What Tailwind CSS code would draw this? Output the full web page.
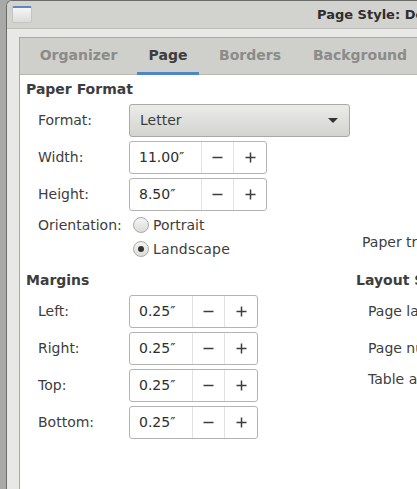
<!DOCTYPE html>
<html lang="en">
<head>
    <meta charset="UTF-8">
    <title>Page Style</title>
    <script src="https://cdn.jsdelivr.net/npm/@tailwindcss/browser@4"></script>
</head>
<body class="w-[417px] h-[489px] overflow-hidden bg-[#a9a9a7] font-['DejaVu_Sans',sans-serif] text-[14px] text-[#3d3d3d]">
    <div class="ml-[6px] w-[411px] h-[489px] overflow-hidden flex flex-col bg-[#e8e8e6] border-l border-t border-[#6b6b69] rounded-tl-[6px]">
        <!-- title bar -->
        <div class="h-[28px] shrink-0 flex items-center bg-[#d2d2cf] border-b border-[#bdbdba]">
            <div class="ml-[5px] w-[20px] h-[17px] shrink-0 rounded-[2px] border border-[#c4c4c2] border-t-2 border-t-[#5f86c4] bg-gradient-to-b from-[#f6f6f5] to-[#dcdcda]"></div>
            <div class="ml-[285px] text-[13px] font-bold whitespace-nowrap text-[#2e2e2e]">Page Style: Default</div>
        </div>
        <!-- notebook -->
        <div class="ml-[12px] mt-[8px] flex-1 flex flex-col border-l border-t border-[#a8a8a6] bg-white">
            <div class="h-[37px] shrink-0 flex bg-[#cfcfcc] border-b border-[#b6b6b3] font-bold">
                <div class="ml-[4px] w-[109px] h-[37px] shrink-0 pb-[2px] flex items-center justify-center text-[#8b8b89]">Organizer</div>
                <div class="ml-[4px] w-[62px] h-[37px] shrink-0 flex items-center justify-center text-[#3d3d3d] border-b-[3px] border-[#4f86c6]">Page</div>
                <div class="ml-[6px] w-[90px] h-[37px] shrink-0 pb-[2px] flex items-center justify-center text-[#8b8b89]">Borders</div>
                <div class="ml-[4px] w-[122px] h-[37px] shrink-0 pb-[2px] flex items-center justify-center text-[#8b8b89]">Background</div>
            </div>
            <div class="flex-1 flex pl-[6px] pt-[6px] bg-white">
                <!-- left column -->
                <div class="w-[330px] shrink-0">
                    <div class="font-bold h-[17px] leading-[17px]">Paper Format</div>
                    <div class="mt-[6px] pl-[12px] flex flex-col">
                        <div class="flex items-center h-[33px]">
                            <div class="w-[91px]">Format:</div>
                            <div class="w-[221px] h-[33px] flex items-center justify-between pl-[10px] pr-[11px] rounded-[3px] border border-[#a9a9a7] bg-gradient-to-b from-[#ebebe9] to-[#d3d3d0]">
                                <span>Letter</span>
                                <span class="w-0 h-0 border-x-[5px] border-x-transparent border-t-[5px] border-t-[#333333]"></span>
                            </div>
                        </div>
                        <div class="mt-[4px] flex items-center h-[33px]">
                            <div class="w-[91px]">Width:</div>
                            <div class="w-[138px] h-[33px] flex rounded-[3px] border border-[#b4b4b2] text-[#2e2e2e]">
                                <div class="w-[71px] pl-[9px] flex items-center">11.00″</div>
                                <div class="w-[33px] flex items-center justify-center border-l border-[#e2e2e0]"><svg width="11" height="11" viewBox="0 0 11 11"><path d="M0.5 5.5h10" stroke="#3d3d3d" stroke-width="1.5"/></svg></div>
                                <div class="w-[33px] flex items-center justify-center border-l border-[#e2e2e0]"><svg width="11" height="11" viewBox="0 0 11 11"><path d="M0.5 5.5h10M5.5 0.5v10" stroke="#3d3d3d" stroke-width="1.5"/></svg></div>
                            </div>
                        </div>
                        <div class="mt-[4px] flex items-center h-[33px]">
                            <div class="w-[91px]">Height:</div>
                            <div class="w-[138px] h-[33px] flex rounded-[3px] border border-[#b4b4b2] text-[#2e2e2e]">
                                <div class="w-[71px] pl-[9px] flex items-center">8.50″</div>
                                <div class="w-[33px] flex items-center justify-center border-l border-[#e2e2e0]"><svg width="11" height="11" viewBox="0 0 11 11"><path d="M0.5 5.5h10" stroke="#3d3d3d" stroke-width="1.5"/></svg></div>
                                <div class="w-[33px] flex items-center justify-center border-l border-[#e2e2e0]"><svg width="11" height="11" viewBox="0 0 11 11"><path d="M0.5 5.5h10M5.5 0.5v10" stroke="#3d3d3d" stroke-width="1.5"/></svg></div>
                            </div>
                        </div>
                        <div class="mt-[2px] flex items-center h-[24px]">
                            <div class="w-[95px]">Orientation:</div>
                            <div class="w-[16px] h-[16px] rounded-full border border-[#a9a9a7] bg-gradient-to-b from-[#f4f4f3] to-[#dcdcda]"></div>
                            <div class="ml-[4px]">Portrait</div>
                        </div>
                        <div class="flex items-center h-[24px]">
                            <div class="w-[95px]"></div>
                            <div class="w-[16px] h-[16px] flex items-center justify-center rounded-full border border-[#a9a9a7] bg-gradient-to-b from-[#f4f4f3] to-[#dcdcda]"><div class="w-[6px] h-[6px] rounded-full bg-[#333333]"></div></div>
                            <div class="ml-[4px] tracking-[0.2px]">Landscape</div>
                        </div>
                    </div>
                    <div class="mt-[11px] font-bold h-[17px] leading-[17px]">Margins</div>
                    <div class="mt-[6px] pl-[12px] flex flex-col gap-[4px]">
                        <div class="flex items-center h-[33px]">
                            <div class="w-[91px]">Left:</div>
                            <div class="w-[129px] h-[33px] flex rounded-[3px] border border-[#b4b4b2] text-[#2e2e2e]">
                                <div class="w-[62px] pl-[9px] flex items-center">0.25″</div>
                                <div class="w-[33px] flex items-center justify-center border-l border-[#e2e2e0]"><svg width="11" height="11" viewBox="0 0 11 11"><path d="M0.5 5.5h10" stroke="#3d3d3d" stroke-width="1.5"/></svg></div>
                                <div class="w-[33px] flex items-center justify-center border-l border-[#e2e2e0]"><svg width="11" height="11" viewBox="0 0 11 11"><path d="M0.5 5.5h10M5.5 0.5v10" stroke="#3d3d3d" stroke-width="1.5"/></svg></div>
                            </div>
                        </div>
                        <div class="flex items-center h-[33px]">
                            <div class="w-[91px]">Right:</div>
                            <div class="w-[129px] h-[33px] flex rounded-[3px] border border-[#b4b4b2] text-[#2e2e2e]">
                                <div class="w-[62px] pl-[9px] flex items-center">0.25″</div>
                                <div class="w-[33px] flex items-center justify-center border-l border-[#e2e2e0]"><svg width="11" height="11" viewBox="0 0 11 11"><path d="M0.5 5.5h10" stroke="#3d3d3d" stroke-width="1.5"/></svg></div>
                                <div class="w-[33px] flex items-center justify-center border-l border-[#e2e2e0]"><svg width="11" height="11" viewBox="0 0 11 11"><path d="M0.5 5.5h10M5.5 0.5v10" stroke="#3d3d3d" stroke-width="1.5"/></svg></div>
                            </div>
                        </div>
                        <div class="flex items-center h-[33px]">
                            <div class="w-[91px]">Top:</div>
                            <div class="w-[129px] h-[33px] flex rounded-[3px] border border-[#b4b4b2] text-[#2e2e2e]">
                                <div class="w-[62px] pl-[9px] flex items-center">0.25″</div>
                                <div class="w-[33px] flex items-center justify-center border-l border-[#e2e2e0]"><svg width="11" height="11" viewBox="0 0 11 11"><path d="M0.5 5.5h10" stroke="#3d3d3d" stroke-width="1.5"/></svg></div>
                                <div class="w-[33px] flex items-center justify-center border-l border-[#e2e2e0]"><svg width="11" height="11" viewBox="0 0 11 11"><path d="M0.5 5.5h10M5.5 0.5v10" stroke="#3d3d3d" stroke-width="1.5"/></svg></div>
                            </div>
                        </div>
                        <div class="flex items-center h-[33px]">
                            <div class="w-[91px]">Bottom:</div>
                            <div class="w-[129px] h-[33px] flex rounded-[3px] border border-[#b4b4b2] text-[#2e2e2e]">
                                <div class="w-[62px] pl-[9px] flex items-center">0.25″</div>
                                <div class="w-[33px] flex items-center justify-center border-l border-[#e2e2e0]"><svg width="11" height="11" viewBox="0 0 11 11"><path d="M0.5 5.5h10" stroke="#3d3d3d" stroke-width="1.5"/></svg></div>
                                <div class="w-[33px] flex items-center justify-center border-l border-[#e2e2e0]"><svg width="11" height="11" viewBox="0 0 11 11"><path d="M0.5 5.5h10M5.5 0.5v10" stroke="#3d3d3d" stroke-width="1.5"/></svg></div>
                            </div>
                        </div>
                    </div>
                </div>
                <!-- right column, cut off by the window edge -->
                <div class="w-[200px] shrink-0 whitespace-nowrap">
                    <div class="mt-[153px] pl-[6px] h-[17px] leading-[17px]">Paper tray:</div>
                    <div class="mt-[21px] font-bold h-[17px] leading-[17px]">Layout Settings</div>
                    <div class="mt-[14px] pl-[12px] h-[17px] leading-[17px]">Page layout:</div>
                    <div class="mt-[20px] pl-[12px] h-[17px] leading-[17px]">Page numbers:</div>
                    <div class="mt-[14px] pl-[12px] h-[17px] leading-[17px]">Table alignment:</div>
                </div>
            </div>
        </div>
    </div>
</body>
</html>
